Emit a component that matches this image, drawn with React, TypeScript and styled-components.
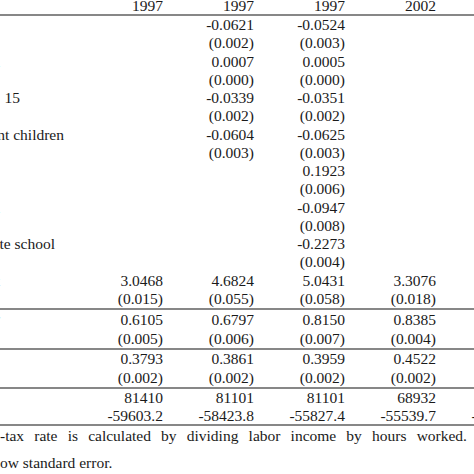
import React from 'react';
import styled, { createGlobalStyle } from 'styled-components';

const GlobalStyle = createGlobalStyle`
  html, body {
    margin: 0;
    padding: 0;
    background: #fff;
  }
`;

const Page = styled.div`
  width: 474px;
  height: 474px;
  overflow: hidden;
  background: #fff;
  color: #1a1a1a;
  font-family: "Liberation Serif", "Times New Roman", serif;
  font-size: 15.5px;
`;

const Table = styled.div`
  width: 527px;
`;

const Row = styled.div<{ $h: number }>`
  display: grid;
  grid-template-columns: 72px repeat(5, 91px);
  height: ${p => p.$h}px;
  line-height: ${p => p.$h}px;
`;

const HeaderRow = styled(Row)`
  margin-top: -3px;
`;

const Block = styled.div<{ $last?: boolean }>`
  border-top: 2px solid #878787;
  border-bottom: ${p => (p.$last ? '2px solid #878787' : 'none')};
`;

const Cell = styled.div`
  text-align: right;
  white-space: nowrap;
`;

// the stub column is cut off on the left in the screenshot; $end is where the label text stops
const LabelCell = styled.div<{ $end: number }>`
  display: flex;
  justify-content: flex-end;
  overflow: hidden;
  white-space: nowrap;
  padding-right: ${p => 72 - p.$end}px;

  span {
    flex-shrink: 0;
  }
`;

const Note = styled.div`
  margin-top: -3px;
  line-height: 26.5px;
`;

const NoteLine = styled.div<{ $justify?: boolean }>`
  width: 467px;
  text-align: ${p => (p.$justify ? 'justify' : 'left')};
  text-align-last: ${p => (p.$justify ? 'justify' : 'left')};
`;

type Line = { label?: string; end?: number; cells: string[] };

const main: Line[] = [
  { label: 'Age', end: 0, cells: ['', '-0.0621', '-0.0524', '', ''] },
  { cells: ['', '(0.002)', '(0.003)', '', ''] },
  { label: 'Age squared', end: 0, cells: ['', '0.0007', '0.0005', '', ''] },
  { cells: ['', '(0.000)', '(0.000)', '', ''] },
  { label: 'Children under age\u2003\u200215', end: 20, cells: ['', '-0.0339', '-0.0351', '', ''] },
  { cells: ['', '(0.002)', '(0.002)', '', ''] },
  { label: 'Number of dependent children', end: 64, cells: ['', '-0.0604', '-0.0625', '', ''] },
  { cells: ['', '(0.003)', '(0.003)', '', ''] },
  { label: 'Male', end: 0, cells: ['', '', '0.1923', '', ''] },
  { cells: ['', '', '(0.006)', '', ''] },
  { label: 'Married', end: 0, cells: ['', '', '-0.0947', '', ''] },
  { cells: ['', '', '(0.008)', '', ''] },
  { label: 'Graduate school', end: 55, cells: ['', '', '-0.2273', '', ''] },
  { cells: ['', '', '(0.004)', '', ''] },
  { label: 'Constant', end: 0, cells: ['3.0468', '4.6824', '5.0431', '3.3076', '3.4512'] },
  { cells: ['(0.015)', '(0.055)', '(0.058)', '(0.018)', '(0.020)'] },
];

const sigma: Line[] = [
  { label: 'σ', end: 0, cells: ['0.6105', '0.6797', '0.8150', '0.8385', '0.8421'] },
  { cells: ['(0.005)', '(0.006)', '(0.007)', '(0.004)', '(0.004)'] },
];

const rho: Line[] = [
  { label: 'ρ', end: 0, cells: ['0.3793', '0.3861', '0.3959', '0.4522', '0.4633'] },
  { cells: ['(0.002)', '(0.002)', '(0.002)', '(0.002)', '(0.002)'] },
];

const fit: Line[] = [
  { label: 'N', end: 0, cells: ['81410', '81101', '81101', '68932', '69214'] },
  { label: 'Log L', end: 0, cells: ['-59603.2', '-58423.8', '-55827.4', '-55539.7', '-55160.3'] },
];

const renderRows = (lines: Line[], h: number) =>
  lines.map((line, i) => (
    <Row $h={h} key={i}>
      <LabelCell $end={line.end ?? 0}>
        <span>{line.label ?? ''}</span>
      </LabelCell>
      {line.cells.map((c, j) => (
        <Cell key={j}>{c}</Cell>
      ))}
    </Row>
  ));

const App = () => (
  <>
    <GlobalStyle />
    <Page>
      <Table>
        <HeaderRow $h={17}>
          <LabelCell $end={0}>
            <span />
          </LabelCell>
          <Cell>1997</Cell>
          <Cell>1997</Cell>
          <Cell>1997</Cell>
          <Cell>2002</Cell>
          <Cell>2002</Cell>
        </HeaderRow>
        <Block>{renderRows(main, 18.25)}</Block>
        <Block>{renderRows(sigma, 19)}</Block>
        <Block>{renderRows(rho, 18.5)}</Block>
        <Block $last>{renderRows(fit, 17.5)}</Block>
      </Table>
      <Note>
        <NoteLine $justify>-tax rate is calculated by dividing labor income by hours worked.</NoteLine>
        <NoteLine>ow standard error.</NoteLine>
      </Note>
    </Page>
  </>
);

export default App;
